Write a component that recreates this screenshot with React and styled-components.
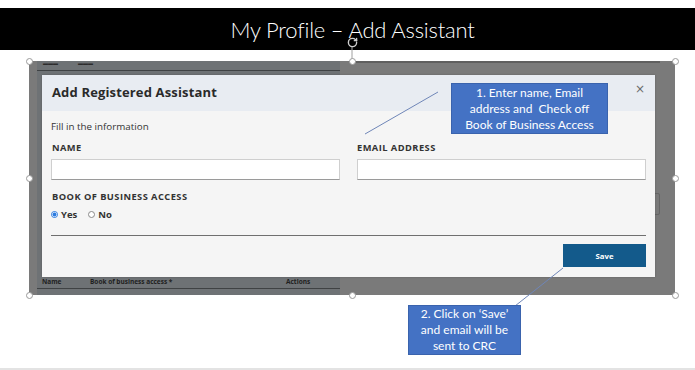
import React from "react";
import styled, { createGlobalStyle } from "styled-components";
import { RotateCw } from "lucide-react";

const Global = createGlobalStyle`
  html, body { margin: 0; padding: 0; background: #fff; }
  * { box-sizing: border-box; }
`;

const Slide = styled.div`
  position: relative;
  width: 695px;
  height: 370px;
  overflow: hidden;
  background: #fff;
  font-family: "Open Sans", "Noto Sans", sans-serif;
  border-bottom: 2px solid #e3e3e3;
`;

const TitleBar = styled.div`
  margin-top: 8px;
  height: 42px;
  background: #000;
  color: #fff;
  display: flex;
  align-items: center;
  justify-content: center;
  padding-left: 10px;
  font-family: Lato, "Open Sans", sans-serif;
  font-weight: 300;
  font-size: 22px;
  letter-spacing: -0.2px;
`;

const Shot = styled.div`
  position: relative;
  margin: 11px 0 0 29px;
  width: 646px;
  height: 234px;
  background: #7a7a7a;
  display: flex;
  font-family: "Open Sans", sans-serif;
`;

const LeftPanel = styled.div`
  margin-left: 8px;
  width: 303px;
  background: #6e7275;
  display: flex;
  flex-direction: column;
  justify-content: space-between;
`;

const PanelTop = styled.div`
  height: 10px;
  border-bottom: 1px solid #3f4244;
  display: flex;
  gap: 20px;
  padding-left: 6px;
  font-size: 5px;
  line-height: 4px;
  color: #2c2c2c;
  overflow: hidden;
`;

const TableHead = styled.div`
  height: 14px;
  margin-bottom: 6px;
  border-bottom: 1px solid #3f4244;
  display: grid;
  grid-template-columns: 48px 196px 1fr;
  padding-left: 5px;
  align-items: center;
  font-size: 6.5px;
  font-weight: 700;
  color: #1f1f1f;
`;

const RightPanel = styled.div`
  margin-left: 12px;
  width: 308px;
  border-top: 2px solid #5f5f5f;
  display: flex;
  flex-direction: column;
  align-items: flex-end;
  padding-top: 130px;
`;

const GhostBox = styled.div`
  width: 14px;
  height: 22px;
  border: 1px solid #666;
  border-radius: 2px;
`;

const Modal = styled.div`
  position: absolute;
  left: 13px;
  top: 14px;
  width: 613px;
  height: 202px;
  background: #f5f5f5;
  display: flex;
  flex-direction: column;
  box-shadow: 0 0 2px rgba(0,0,0,0.2);
`;

const ModalHeader = styled.div`
  height: 36px;
  background: #e8ecf2;
  display: flex;
  align-items: center;
  justify-content: space-between;
  padding: 0 10px 2px 10px;
`;

const ModalTitle = styled.div`
  font-size: 13px;
  font-weight: 700;
  color: #2a2a2a;
  letter-spacing: 0.15px;
`;

const Close = styled.div`
  font-size: 12px;
  color: #6b6b6b;
  margin-top: -6px;
  font-family: "DejaVu Sans", sans-serif;
`;

const ModalBody = styled.div`
  padding: 0 9px;
  display: flex;
  flex-direction: column;
`;

const Hint = styled.div`
  margin-top: 9px;
  font-size: 9.8px;
  color: #333;
  line-height: 13px;
`;

const Fields = styled.div`
  margin-top: 9px;
  display: grid;
  grid-template-columns: 289px 289px;
  column-gap: 17px;
`;

const Label = styled.div`
  font-size: 9.3px;
  font-weight: 700;
  color: #333;
  letter-spacing: 0.45px;
  line-height: 12px;
  margin-left: ${p => p.$indent || 0}px;
`;

const Input = styled.div`
  margin-top: 5px;
  height: 21px;
  background: #fff;
  border: 1px solid #cfcfcf;
  border-bottom-color: #9a9a9a;
`;

const Section = styled.div`
  margin-top: 11px;
`;

const Radios = styled.div`
  margin-top: 5px;
  display: flex;
  align-items: center;
  gap: 11px;
`;

const RadioItem = styled.label`
  display: flex;
  align-items: center;
  gap: 3px;
  font-size: 9.5px;
  font-weight: 700;
  color: #333;
`;

const Dot = styled.span`
  width: 7px;
  height: 7px;
  border-radius: 50%;
  border: 1px solid ${p => (p.$on ? "#2b7be0" : "#8a8a8a")};
  background: ${p => (p.$on ? "radial-gradient(circle, #2b7be0 0 1.8px, #fff 2.2px)" : "#fff")};
`;

const Rule = styled.div`
  margin-top: 14px;
  height: 1px;
  background: #6f6f6f;
`;

const Footer = styled.div`
  margin-top: 8px;
  display: flex;
  justify-content: flex-end;
`;

const SaveBtn = styled.button`
  width: 83px;
  height: 23px;
  border: none;
  background: #135a8b;
  color: #fff;
  font-family: "Open Sans", sans-serif;
  font-size: 7.8px;
  font-weight: 700;
  padding: 0;
`;

const Handle = styled.span`
  position: absolute;
  width: 7px;
  height: 7px;
  margin: -3.5px 0 0 -3.5px;
  border-radius: 50%;
  background: #fff;
  border: 1px solid #9a9a9a;
`;

const Rotate = styled.div`
  position: absolute;
  left: 346px;
  top: 36px;
  width: 12px;
  height: 12px;
  display: flex;
  align-items: center;
  justify-content: center;
  color: #cfcfcf;
`;

const Callout = styled.div`
  position: absolute;
  background: #4472c4;
  border: 1px solid #3a63ad;
  color: #fff;
  font-family: Lato, "Open Sans", sans-serif;
  font-size: 12px;
  line-height: 16px;
  text-align: center;
  display: flex;
  align-items: center;
  justify-content: center;
`;

const Lines = styled.svg`
  position: absolute;
  left: 0;
  top: 0;
  pointer-events: none;
`;

const handles = [
  [29, 61], [352, 61], [675, 61],
  [29, 178], [675, 178],
  [29, 295], [352, 295], [675, 295],
];

export default function App() {
  return (
    <>
      <Global />
      <Slide>
        <TitleBar>My Profile – Add Assistant</TitleBar>
        <Shot>
          <LeftPanel>
            <PanelTop>
              <span>▬▬▬</span>
              <span>▬▬▬</span>
            </PanelTop>
            <TableHead>
              <span>Name</span>
              <span>Book of business access *</span>
              <span>Actions</span>
            </TableHead>
          </LeftPanel>
          <RightPanel>
            <GhostBox />
          </RightPanel>
          <Modal>
            <ModalHeader>
              <ModalTitle>Add Registered Assistant</ModalTitle>
              <Close>×</Close>
            </ModalHeader>
            <ModalBody>
              <Hint>Fill in the information</Hint>
              <Fields>
                <div>
                  <Label $indent={1}>NAME</Label>
                  <Input />
                </div>
                <div>
                  <Label>EMAIL ADDRESS</Label>
                  <Input />
                </div>
              </Fields>
              <Section>
                <Label $indent={1}>BOOK OF BUSINESS ACCESS</Label>
                <Radios>
                  <RadioItem><Dot $on />Yes</RadioItem>
                  <RadioItem><Dot />No</RadioItem>
                </Radios>
              </Section>
              <Rule />
              <Footer>
                <SaveBtn>Save</SaveBtn>
              </Footer>
            </ModalBody>
          </Modal>
        </Shot>

        <Lines width="695" height="370" viewBox="0 0 695 370">
          <line x1="352" y1="46" x2="352" y2="61" stroke="#a0a0a0" strokeWidth="1" />
          <line x1="365" y1="134" x2="438" y2="92" stroke="#6f86b8" strokeWidth="1" />
          <line x1="515" y1="306" x2="563" y2="268" stroke="#6f86b8" strokeWidth="1" />
        </Lines>
        <Rotate><RotateCw size={11} strokeWidth={3} /></Rotate>
        {handles.map(([x, y]) => (
          <Handle key={`${x}-${y}`} style={{ left: x, top: y }} />
        ))}

        <Callout style={{ left: 451, top: 83, width: 157, height: 51 }}>
          1. Enter name, Email<br />address and&nbsp; Check off<br />Book of Business Access
        </Callout>
        <Callout style={{ left: 408, top: 305, width: 113, height: 50 }}>
          2. Click on ‘Save’<br />and email will be<br />sent to CRC
        </Callout>
      </Slide>
    </>
  );
}
